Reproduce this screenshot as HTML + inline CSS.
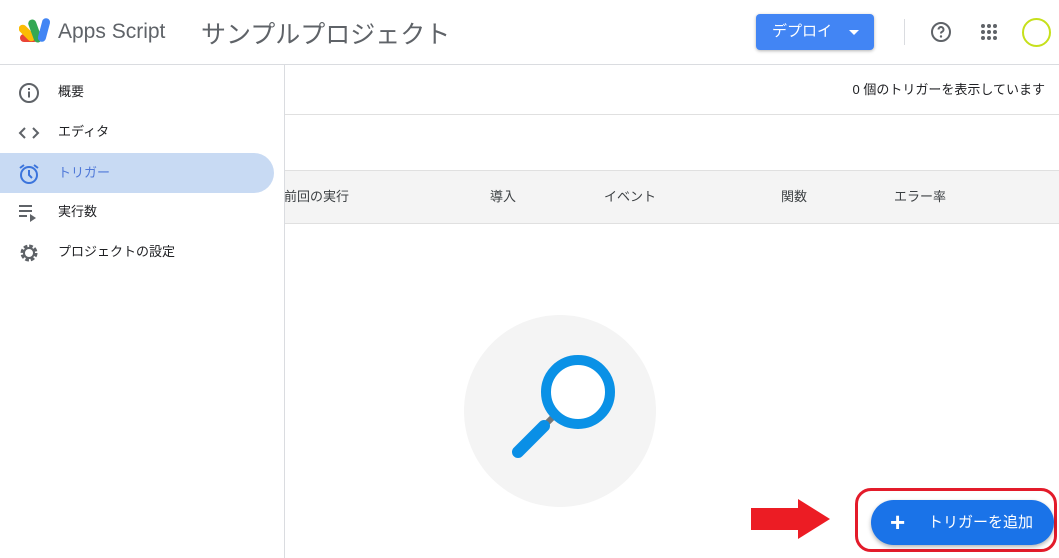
<!DOCTYPE html>
<html><head><meta charset="utf-8"><style>
*{margin:0;padding:0;box-sizing:border-box}
body{width:1059px;height:558px;overflow:hidden;background:#fff;font-family:"Liberation Sans","Noto Sans CJK JP",sans-serif;position:relative;color:#202124}
.a{position:absolute}
.hdr{left:0;top:0;width:1059px;height:65px;border-bottom:1px solid #dadce0}
.side{left:0;top:65px;width:285px;height:493px;border-right:1px solid #dadce0;background:#fff;z-index:2}
.item{position:absolute;left:0;width:274px;height:40px;font-size:13px;line-height:40px;padding-left:58px}
.item svg{position:absolute;left:18px;top:10px}
.th{font-size:13px;top:186px;color:#3c4043}
</style></head><body>
<div class="a hdr"></div>
<svg class="a" style="left:19px;top:17px" width="34" height="28" viewBox="0 0 34 28">
<rect x="1" y="17" width="18" height="8" rx="4" fill="#ea4335"/>
<rect x="4" y="6" width="8" height="20" rx="4" transform="rotate(-45 8 16)" fill="#fbbc04"/>
<rect x="12" y="2" width="8" height="24" rx="4" transform="rotate(-20 16 14)" fill="#34a853"/>
<rect x="21" y="1" width="8" height="24" rx="4" transform="rotate(15 25 13)" fill="#4285f4"/>
</svg>
<div class="a" style="left:58px;top:20px;font-size:21px;color:#5f6368">Apps Script</div>
<div class="a" style="left:201px;top:15px;font-size:25px;color:#5f6368">サンプルプロジェクト</div>
<div class="a" style="left:756px;top:14px;width:118px;height:36px;background:#4285f4;border-radius:4px;box-shadow:0 1px 3px rgba(0,0,0,.3);color:#fff;font-size:15px;line-height:36px;padding-left:16px">デプロイ<span style="position:absolute;left:93px;top:16px;border:5px solid transparent;border-top-color:#fff"></span></div>
<div class="a" style="left:904px;top:19px;width:1px;height:26px;background:#dadce0"></div>
<svg class="a" style="left:929px;top:20px" width="24" height="24" viewBox="0 0 24 24"><circle cx="12" cy="12" r="9" fill="none" stroke="#5f6368" stroke-width="2"/><path d="M9.5 9.5a2.5 2.5 0 1 1 3.5 2.3c-.7.4-1 .8-1 1.7" fill="none" stroke="#5f6368" stroke-width="2"/><circle cx="12" cy="16.5" r="1.2" fill="#5f6368"/></svg>
<svg class="a" style="left:980px;top:23px" width="18" height="18" viewBox="0 0 18 18" fill="#5f6368"><circle cx="3" cy="3" r="2"/><circle cx="9" cy="3" r="2"/><circle cx="15" cy="3" r="2"/><circle cx="3" cy="9" r="2"/><circle cx="9" cy="9" r="2"/><circle cx="15" cy="9" r="2"/><circle cx="3" cy="15" r="2"/><circle cx="9" cy="15" r="2"/><circle cx="15" cy="15" r="2"/></svg>
<div class="a" style="left:1022px;top:18px;width:29px;height:29px;border:2px solid #c6e01b;border-radius:50%"></div>

<div class="a side">
<div class="item" style="top:7px"><svg width="22" height="22" viewBox="0 0 22 22"><circle cx="11" cy="11" r="9" fill="none" stroke="#5f6368" stroke-width="2"/><rect x="10" y="9.5" width="2" height="6" fill="#5f6368"/><rect x="10" y="6" width="2" height="2" fill="#5f6368"/></svg>概要</div>
<div class="item" style="top:47px"><svg width="22" height="22" viewBox="0 0 22 22"><path d="M7 6l-5 5 5 5M15 6l5 5-5 5" fill="none" stroke="#5f6368" stroke-width="2"/></svg>エディタ</div>
<div class="item" style="top:88px;background:#c8daf3;border-radius:0 20px 20px 0;color:#4f78d8"><svg width="22" height="22" viewBox="0 0 22 22"><circle cx="11" cy="12" r="8" fill="none" stroke="#3b74dc" stroke-width="2"/><path d="M11 7v5l3 3M2 5l4-3M20 5l-4-3" fill="none" stroke="#3b74dc" stroke-width="2"/></svg>トリガー</div>
<div class="item" style="top:127px"><svg width="22" height="22" viewBox="0 0 22 22"><path d="M1 4h13M1 9h13M1 14h8" stroke="#5f6368" stroke-width="2"/><path d="M12 12l6 4-6 4z" fill="#5f6368"/></svg>実行数</div>
<div class="item" style="top:167px"><svg width="22" height="22" viewBox="0 0 22 22"><circle cx="11" cy="11" r="6.5" fill="none" stroke="#5f6368" stroke-width="4" stroke-dasharray="3.4 1.7"/><circle cx="11" cy="11" r="5" fill="none" stroke="#5f6368" stroke-width="2"/></svg>プロジェクトの設定</div>
</div>

<div class="a" style="left:285px;top:79px;width:760px;text-align:right;font-size:13px">0 個のトリガーを表示しています</div>
<div class="a" style="left:285px;top:114px;width:774px;height:1px;background:#e0e0e0"></div>
<div class="a" style="left:285px;top:170px;width:774px;height:54px;background:#f4f4f4;border-top:1px solid #e0e0e0;border-bottom:1px solid #e0e0e0"></div>
<div class="a th" style="left:284px">前回の実行</div>
<div class="a th" style="left:490px">導入</div>
<div class="a th" style="left:604px">イベント</div>
<div class="a th" style="left:781px">関数</div>
<div class="a th" style="left:894px">エラー率</div>

<svg class="a" style="left:460px;top:312px" width="200" height="200" viewBox="0 0 200 200">
<circle cx="100" cy="99" r="96" fill="#f4f4f4"/>
<path d="M80 118L96 102" stroke="#757575" stroke-width="6"/>
<path d="M58 140L84 114" stroke="#0a8fe6" stroke-width="12" stroke-linecap="round"/>
<circle cx="118" cy="80" r="32" fill="#fff" stroke="#0a91e6" stroke-width="10"/>
</svg>

<svg class="a" style="left:750px;top:498px" width="82" height="44" viewBox="0 0 82 44"><path d="M1 10h47V1l32 20-32 20V32H1z" fill="#ec1c24"/></svg>
<div class="a" style="left:855px;top:488px;width:202px;height:64px;border:3px solid #e31b2a;border-radius:16px"></div>
<div class="a" style="left:871px;top:500px;width:183px;height:45px;background:#1a73e8;border-radius:23px;box-shadow:0 2px 4px rgba(0,0,0,.3);color:#fff;font-size:15px;line-height:45px;padding-left:57px">トリガーを追加<span style="position:absolute;left:19px;top:0;font-size:26px;font-weight:bold">+</span></div>
</body></html>
